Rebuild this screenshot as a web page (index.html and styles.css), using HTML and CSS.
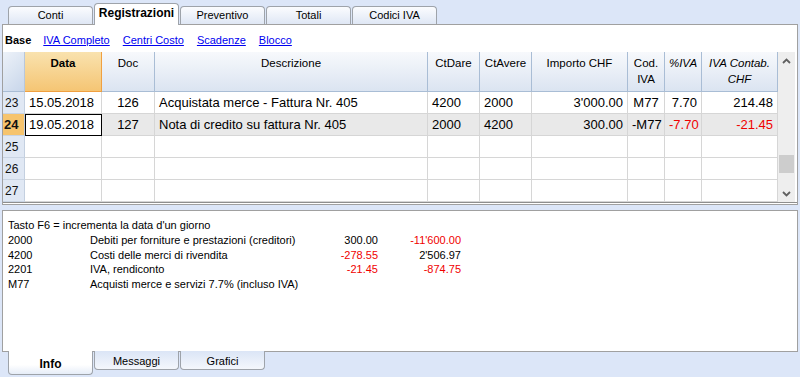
FILE: index.html
```html
<!DOCTYPE html>
<html lang="it">
<head>
<meta charset="utf-8">
<title>Registrazioni</title>
<link rel="stylesheet" href="styles.css">
</head>
<body>
<div class="app">
  <div class="tabs tabs-top">
    <div class="tab">Conti</div>
    <div class="tab active">Registrazioni</div>
    <div class="tab">Preventivo</div>
    <div class="tab">Totali</div>
    <div class="tab">Codici IVA</div>
  </div>

  <div class="panel top-panel">
    <div class="views">
      <span class="view-current">Base</span>
      <a class="view-link">IVA Completo</a>
      <a class="view-link">Centri Costo</a>
      <a class="view-link">Scadenze</a>
      <a class="view-link">Blocco</a>
    </div>
    <div class="gridwrap">
      <table class="grid">
        <colgroup>
          <col class="c-num"><col class="c-data"><col class="c-doc"><col class="c-desc"><col class="c-dare"><col class="c-avere"><col class="c-imp"><col class="c-cod"><col class="c-pct"><col class="c-iva">
        </colgroup>
        <thead>
          <tr>
            <th class="corner"></th>
            <th class="h-sel">Data</th>
            <th>Doc</th>
            <th>Descrizione</th>
            <th>CtDare</th>
            <th>CtAvere</th>
            <th>Importo CHF</th>
            <th>Cod.<br>IVA</th>
            <th class="it">%IVA</th>
            <th class="it">IVA Contab.<br>CHF</th>
          </tr>
        </thead>
        <tbody>
          <tr>
            <td class="num">23</td>
            <td>15.05.2018</td>
            <td class="ctr">126</td>
            <td>Acquistata merce - Fattura Nr. 405</td>
            <td>4200</td>
            <td>2000</td>
            <td class="r">3'000.00</td>
            <td class="ctr">M77</td>
            <td class="r">7.70</td>
            <td class="r">214.48</td>
          </tr>
          <tr class="cur">
            <td class="num sel">24</td>
            <td class="focus">19.05.2018</td>
            <td class="ctr">127</td>
            <td>Nota di credito su fattura Nr. 405</td>
            <td>2000</td>
            <td>4200</td>
            <td class="r">300.00</td>
            <td class="ctr">-M77</td>
            <td class="r neg">-7.70</td>
            <td class="r neg">-21.45</td>
          </tr>
          <tr>
            <td class="num">25</td><td></td><td></td><td></td><td></td><td></td><td></td><td></td><td></td><td></td>
          </tr>
          <tr>
            <td class="num">26</td><td></td><td></td><td></td><td></td><td></td><td></td><td></td><td></td><td></td>
          </tr>
          <tr>
            <td class="num">27</td><td></td><td></td><td></td><td></td><td></td><td></td><td></td><td></td><td></td>
          </tr>
        </tbody>
      </table>
      <div class="vscroll">
        <div class="sb-btn">
          <svg width="9" height="6" viewBox="0 0 9 6"><polyline points="1,5 4.5,1.5 8,5" fill="none" stroke="#606060" stroke-width="1.8"/></svg>
        </div>
        <div class="sb-track"><div class="sb-thumb"></div></div>
        <div class="sb-btn">
          <svg width="9" height="6" viewBox="0 0 9 6"><polyline points="1,1 4.5,4.5 8,1" fill="none" stroke="#606060" stroke-width="1.8"/></svg>
        </div>
      </div>
    </div>
  </div>

  <div class="panel info-panel">
    <div class="info">
      <div class="info-title">Tasto F6 = incrementa la data d'un giorno</div>
      <span>2000</span><span>Debiti per forniture e prestazioni (creditori)</span><span class="r">300.00</span><span class="r neg">-11'600.00</span>
      <span>4200</span><span>Costi delle merci di rivendita</span><span class="r neg">-278.55</span><span class="r">2'506.97</span>
      <span>2201</span><span>IVA, rendiconto</span><span class="r neg">-21.45</span><span class="r neg">-874.75</span>
      <span>M77</span><span>Acquisti merce e servizi 7.7% (incluso IVA)</span><span></span><span></span>
    </div>
  </div>

  <div class="tabs tabs-bottom">
    <div class="btab active">Info</div>
    <div class="btab">Messaggi</div>
    <div class="btab">Grafici</div>
  </div>
</div>
</body>
</html>
```

FILE: styles.css
```css
* { box-sizing: border-box; }

html, body {
  margin: 0;
  padding: 0;
}

body {
  width: 800px;
  height: 377px;
  overflow: hidden;
  background: #dce6f8;
  font-family: "Liberation Sans", Arial, sans-serif;
  font-size: 11px;
  color: #000;
}

.app {
  display: flex;
  flex-direction: column;
  height: 377px;
}

/* top tabs */
.tabs-top {
  display: flex;
  align-items: flex-end;
  gap: 1px;
  height: 24px;
  padding-left: 8px;
}

.tab {
  width: 85px;
  height: 18px;
  border: 1px solid #9ea3aa;
  border-bottom: 0;
  border-radius: 4px 4px 0 0;
  background: linear-gradient(#fbfcfe, #dfe7f5);
  text-align: center;
  line-height: 17px;
  font-size: 11px;
}

.tab.active {
  height: 22px;
  margin-bottom: -1px;
  position: relative;
  z-index: 1;
  background: #fff;
  font-weight: bold;
  font-size: 12px;
  line-height: 18px;
}

/* panels */
.panel {
  margin: 0 2px;
  border: 1px solid #a0a0a0;
  background: #fff;
}

.top-panel {
  height: 181px;
  display: flex;
  flex-direction: column;
}

.views {
  height: 27px;
  display: flex;
  align-items: center;
  gap: 13px;
  padding-left: 2px;
  padding-top: 2px;
  font-size: 11px;
}

.view-current {
  font-weight: bold;
  margin-right: -1px;
}

.view-link {
  color: #0000f0;
  text-decoration: underline;
}

.gridwrap {
  display: flex;
  height: 151px;
  border-bottom: 1px solid #8e8e8e;
}

/* grid */
.grid {
  width: 775px;
  table-layout: fixed;
  border-collapse: separate;
  border-spacing: 0;
  font-size: 13px;
}

.c-num { width: 22px; }
.c-data { width: 77px; }
.c-doc { width: 53px; }
.c-desc { width: 273px; }
.c-dare { width: 52px; }
.c-avere { width: 52px; }
.c-imp { width: 96px; }
.c-cod { width: 37px; }
.c-pct { width: 37px; }
.c-iva { width: 76px; }

.grid thead tr { height: 40px; }

.grid th {
  font-weight: normal;
  font-size: 11.5px;
  line-height: 16px;
  vertical-align: top;
  text-align: center;
  padding: 3px 2px 0;
  background: linear-gradient(#f7f9fc, #dbe4f1);
  border-right: 1px solid #a9bdd5;
  border-bottom: 1px solid #a9bdd5;
  white-space: nowrap;
  overflow: hidden;
}

.grid th.it { font-style: italic; }

.grid th.corner {
  background: linear-gradient(135deg, #edf2f9, #c8d6ea);
  border-right: 1px solid #b8c7db;
}

.grid th.h-sel {
  font-weight: bold;
  background: linear-gradient(#f9e2ae, #f5c574);
  border-right: 1px solid #f0a040;
  border-bottom: 1px solid #f0a040;
}

.grid tbody tr { height: 22px; }

.grid td {
  padding: 0 4px;
  border-right: 1px solid #d6d6d6;
  border-bottom: 1px solid #d6d6d6;
  white-space: nowrap;
  overflow: hidden;
  vertical-align: middle;
}

.grid td.num {
  padding: 0 0 0 2px;
  font-size: 12px;
  background: #e0e8f4;
  border-right: 1px solid #c4d0e0;
  border-bottom: 1px solid #c9d4e3;
  color: #111;
}

.grid td.num.sel {
  background: #f6c46e;
  font-weight: bold;
  font-size: 13px;
  padding-left: 1px;
}

.grid tr.cur td { background: #e9e9e9; }
.grid tr.cur td.num.sel { background: #f6c46e; }
.grid tr.cur td.focus {
  background: #fff;
  outline: 1px solid #000;
  outline-offset: -1px;
}

.grid td.r { text-align: right; }
.grid td.ctr { text-align: center; }
.neg { color: #f00000; }

/* scrollbar */
.vscroll {
  width: 17px;
  height: 150px;
  background: #eeeeee;
  display: flex;
  flex-direction: column;
}

.sb-btn {
  height: 17px;
  display: flex;
  align-items: center;
  justify-content: center;
}

.sb-track { flex: 1; }

.sb-thumb {
  margin: 86px 1px 0;
  height: 18px;
  background: #cdcdcd;
}

/* info panel */
.info-panel {
  margin-top: 5px;
  height: 142px;
}

.info {
  display: grid;
  grid-template-columns: 82px 230px 58px 83px;
  padding: 7px 0 0 5px;
  line-height: 14.75px;
  font-size: 11px;
}

.info-title { grid-column: 1 / -1; }
.info .r { text-align: right; }

/* bottom tabs */
.tabs-bottom {
  display: flex;
  align-items: flex-start;
  gap: 1px;
  padding-left: 8px;
  margin-top: -1px;
}

.btab {
  width: 85px;
  height: 19px;
  border: 1px solid #9ea3aa;
  border-top: 0;
  border-radius: 0 0 4px 4px;
  background: linear-gradient(#dbe5f6, #f4f7fc);
  text-align: center;
  line-height: 20px;
  font-size: 11px;
}

.btab.active {
  height: 24px;
  position: relative;
  z-index: 1;
  background: linear-gradient(#fff 60%, #e6edf8);
  font-weight: bold;
  font-size: 12px;
  line-height: 26px;
}
```
